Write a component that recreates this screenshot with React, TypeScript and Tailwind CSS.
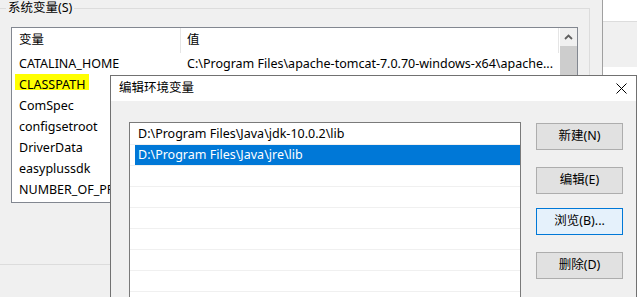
import React from 'react';

// only the first value is visible, the rest sit under the dialog
const sysVars = [
  { name: 'CATALINA_HOME', value: 'C:\\Program Files\\apache-tomcat-7.0.70-windows-x64\\apache...' },
  { name: 'CLASSPATH', value: '', mark: true },
  { name: 'ComSpec', value: '' },
  { name: 'configsetroot', value: '' },
  { name: 'DriverData', value: '' },
  { name: 'easyplussdk', value: '' },
  { name: 'NUMBER_OF_PROCESSORS', value: '' },
];

const paths = ['D:\\Program Files\\Java\\jdk-10.0.2\\lib', 'D:\\Program Files\\Java\\jre\\lib'];

function Button({ label, focused, className }: { label: string; focused?: boolean; className?: string }) {
  return (
    <div
      className={`w-[87px] h-[27px] flex items-center justify-center border text-[12.5px] text-black ${
        focused ? 'bg-[#e5f1fb] border-[#0078d7]' : 'bg-[#e1e1e1] border-[#adadad]'
      } ${className || ''}`}
    >
      {label}
    </div>
  );
}

function EditDialog() {
  return (
    <div className="absolute left-[110px] top-[75px] w-[527px] h-[240px] border border-[#717171] bg-[#f0f0f0] flex flex-col">
      <div className="h-[30px] bg-white flex items-center justify-between pl-[8px] pr-[9px]">
        <span className="text-[12.5px] text-black">编辑环境变量</span>
        <svg width="11" height="11" viewBox="0 0 11 11">
          <path d="M0.5 0.5 L10.5 10.5 M10.5 0.5 L0.5 10.5" stroke="#000" strokeWidth="1" fill="none" />
        </svg>
      </div>
      <div className="flex flex-1">
        <div className="ml-[18px] mt-[21px] w-[392px] flex-none border border-[#7a7a7a] bg-white pt-[1px]">
          {[...paths, '', '', '', '', '', '', ''].map((p, i) => (
            <div key={i} className="h-[21px] border-b border-[#f0f0f0] flex">
              <div
                className={`ml-[5px] flex-1 text-[12.5px] leading-[20px] pl-[3px] whitespace-nowrap ${
                  i === 1 ? 'bg-[#0078d7] text-white' : 'text-black'
                }`}
              >
                {p}
              </div>
            </div>
          ))}
        </div>
        <div className="ml-[15px] pt-[22px] flex flex-col">
          <Button label="新建(N)" />
          <Button label="编辑(E)" className="mt-[17px]" />
          <Button label="浏览(B)..." focused className="mt-[14px]" />
          <Button label="删除(D)" className="mt-[17px]" />
        </div>
      </div>
    </div>
  );
}

export default function App() {
  return (
    <div className="relative w-[637px] h-[297px] overflow-hidden bg-[#f0f0f0] flex font-['Noto_Sans','Noto_Sans_CJK_SC',sans-serif] text-black">
      <div className="w-[603px] h-full flex-none border-r border-[#a0a0a0]">
        <div className="relative mt-[8px] w-[590px] h-[257px] border-t border-r border-b border-[#dcdcdc]">
          <span className="absolute left-[6px] top-[-9px] px-[2px] bg-[#f0f0f0] text-[12.5px] leading-[16px]">系统变量(S)</span>
          <div className="ml-[11px] mt-[18px] w-[567px] h-[176px] border border-[#828790] bg-white flex">
            <div className="w-[548px] flex-none flex flex-col">
              <div className="h-[25px] flex flex-none">
                <div className="w-[169px] border-r border-[#e5e5e5] pl-[7px] text-[12.5px] leading-[24px]">变量</div>
                <div className="w-[378px] border-r border-[#e5e5e5] pl-[6px] text-[12.5px] leading-[24px]">值</div>
              </div>
              {sysVars.map(v => (
                <div key={v.name} className="h-[21px] flex flex-none text-[12.5px] leading-[21px] whitespace-nowrap">
                  <div className="w-[169px] pl-[7px] overflow-hidden">
                    {v.mark ? (
                      <span className="relative inline-block">
                        <span className="absolute left-[-4px] right-[-4px] top-0 h-[16px] bg-[#ffff00]" />
                        <span className="relative">{v.name}</span>
                      </span>
                    ) : (
                      v.name
                    )}
                  </div>
                  <div className="w-[378px] pl-[6px] overflow-hidden">{v.value}</div>
                </div>
              ))}
            </div>
            <div className="w-[17px] flex-none bg-[#f0f0f0] flex flex-col">
              <div className="h-[17px] flex items-center justify-center">
                <svg width="9" height="6" viewBox="0 0 9 6">
                  <path d="M1 5 L4.5 1.5 L8 5" stroke="#606060" strokeWidth="1.8" fill="none" />
                </svg>
              </div>
              <div className="mt-[1px] flex-1 bg-[#cdcdcd]" />
            </div>
          </div>
        </div>
      </div>
      <div className="flex-1 flex flex-col">
        <div className="h-[22px] bg-white border-b border-[#dcdcdc]" />
        <div className="h-[45px] bg-[#f0f0f0]" />
        <div className="h-[8px] bg-white" />
      </div>
      <EditDialog />
    </div>
  );
}
